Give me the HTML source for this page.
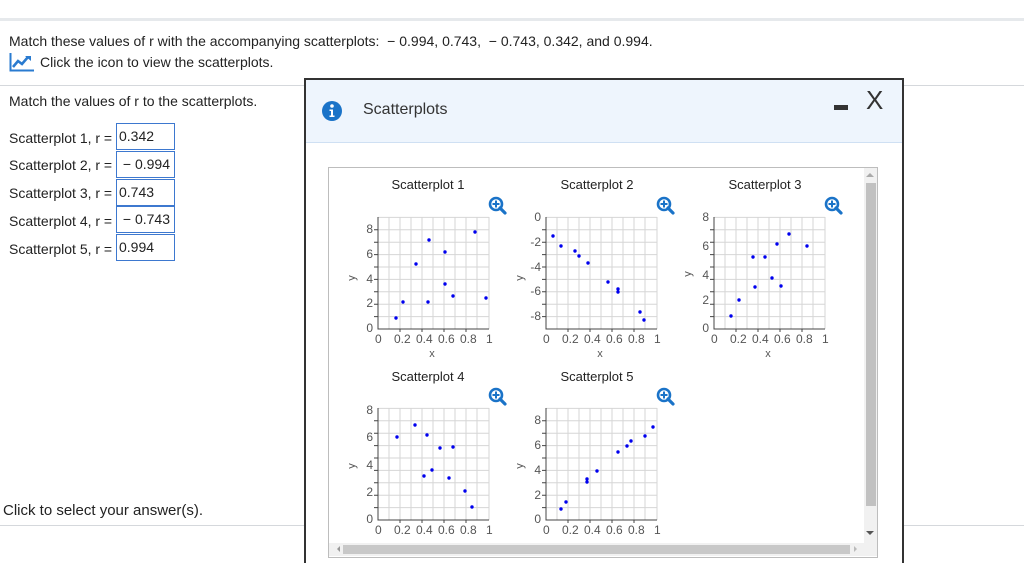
<!DOCTYPE html>
<html><head><meta charset="utf-8">
<style>
html,body{margin:0;width:1024px;height:563px;overflow:hidden}
body{background:#fff;font-family:"Liberation Sans",Arial,sans-serif;color:#222;position:relative}
.a{position:absolute;white-space:nowrap}
.t{font-size:14px}
.box{position:absolute;left:116px;width:55px;height:25px;border:1px solid #3d78cf;font-size:14px;line-height:25px;padding-left:2px;box-sizing:content-box}
</style></head><body>
<div class="a" style="left:0;top:18px;width:1024px;height:3px;background:#e6e9ec"></div>
<div class="a t" style="left:9px;top:33px">Match these values of r with the accompanying scatterplots: &nbsp;− 0.994, 0.743, &nbsp;− 0.743, 0.342, and 0.994.</div>
<svg class="a" style="left:9px;top:52px" width="26" height="20" viewBox="0 0 26 20"><path d="M1.5 1v17.5H25" stroke="#2a7bd0" stroke-width="2" fill="none"/><path d="M4 15l5-6 4 3 6-7" stroke="#2a7bd0" stroke-width="2.6" fill="none"/><path d="M16 4h6v5z" fill="#2a7bd0"/></svg>
<div class="a t" style="left:40px;top:54px">Click the icon to view the scatterplots.</div>
<div class="a" style="left:0;top:85px;width:1024px;height:1px;background:#d5d8dc"></div>
<div class="a t" style="left:9px;top:93px">Match the values of r to the scatterplots.</div>
<div class="a t" style="left:9px;top:130px">Scatterplot 1, r =</div><div class="box" style="top:123px">0.342</div>
<div class="a t" style="left:9px;top:157px">Scatterplot 2, r =</div><div class="box" style="top:151px">&nbsp;− 0.994</div>
<div class="a t" style="left:9px;top:185px">Scatterplot 3, r =</div><div class="box" style="top:179px">0.743</div>
<div class="a t" style="left:9px;top:213px">Scatterplot 4, r =</div><div class="box" style="top:206px">&nbsp;− 0.743</div>
<div class="a t" style="left:9px;top:241px">Scatterplot 5, r =</div><div class="box" style="top:234px">0.994</div>
<div class="a" style="left:0;top:525px;width:1024px;height:1px;background:#d5d8dc"></div>
<div class="a" style="left:3px;top:502px;font-size:15px">Click to select your answer(s).</div>

<div class="a" style="left:304px;top:78px;width:596px;height:500px;border:2px solid #333;background:#fff"></div>
<div class="a" style="left:306px;top:80px;width:596px;height:62px;background:#eef5fd;border-bottom:1px solid #cfe0f3"></div>
<svg class="a" style="left:322px;top:101px" width="20" height="20"><circle cx="10" cy="10" r="10" fill="#1a73c8"/><circle cx="10" cy="5" r="1.8" fill="#fff"/><path d="M7.5 8.5h3.5v6h1.5v1.5h-5v-1.5h1.5v-4.5h-1.5z" fill="#fff"/></svg>
<div class="a" style="left:363px;top:101px;font-size:16px;color:#333">Scatterplots</div>
<div class="a" style="left:834px;top:105px;width:14px;height:5px;background:#333"></div>
<div class="a" style="left:866px;top:85px;font-size:26px;color:#333">X</div>

<div class="a" style="left:328px;top:167px;width:548px;height:389px;border:1px solid #bdbdbd"></div>
<div class="a" style="left:864px;top:168px;width:13px;height:388px;background:#f1f1f1"></div>
<div class="a" style="left:866px;top:183px;width:10px;height:323px;background:#c1c1c1"></div>
<div class="a" style="left:329px;top:543px;width:535px;height:13px;background:#f1f1f1"></div>
<div class="a" style="left:343px;top:545px;width:507px;height:9px;background:#c8c8c8"></div>

<svg class="a" style="left:0;top:0" width="1024" height="563" font-family="Liberation Sans,Arial,sans-serif">
<defs>
<g id="g" stroke="#d6d6d6" stroke-width="1">
<path d="M11 0V-112M22 0V-112M33 0V-112M44 0V-112M55 0V-112M66 0V-112M77 0V-112M88 0V-112M99 0V-112M111 0V-112M0 -12.4H111M0 -24.8H111M0 -37.2H111M0 -49.6H111M0 -62H111M0 -74.4H111M0 -86.8H111M0 -99.2H111M0 -111.6H111"/>
<path d="M0 -112V0H111" stroke="#444" fill="none"/>
<path d="M-4 -12.4H0M-4 -37.2H0M-4 -62H0M-4 -86.8H0M22 0v3M44 0v3M66 0v3M88 0v3M-4 -24.8H0M-4 -49.6H0M-4 -74.4H0M-4 -99.2H0" stroke="#444"/>
<g fill="#555" stroke="none" font-size="12"><text x="-3" y="14">0</text><text x="16" y="14">0.2</text><text x="38" y="14">0.4</text><text x="60" y="14">0.6</text><text x="82" y="14">0.8</text><text x="108" y="14">1</text></g>
</g>
<g id="z"><circle cx="7" cy="7" r="6" fill="none" stroke="#1a73c8" stroke-width="2.6"/><path d="M7 3.5v7M3.5 7h7" stroke="#1a73c8" stroke-width="2"/><path d="M11 11l5 5" stroke="#1a73c8" stroke-width="3.2" stroke-linecap="round"/></g>
</defs>
<g font-size="13" fill="#222" text-anchor="middle"><text x="428" y="189">Scatterplot 1</text><text x="597" y="189">Scatterplot 2</text><text x="765" y="189">Scatterplot 3</text><text x="428" y="381">Scatterplot 4</text><text x="597" y="381">Scatterplot 5</text></g>
<use href="#z" x="489" y="197"/><use href="#z" x="657" y="197"/><use href="#z" x="825" y="197"/><use href="#z" x="489" y="388"/><use href="#z" x="657" y="388"/>
<use href="#g" x="378" y="329"/><use href="#g" x="546" y="329"/><use href="#g" x="714" y="329"/><use href="#g" x="378" y="520"/><use href="#g" x="546" y="520"/>
<g font-size="12" fill="#555" text-anchor="end">
<text x="373" y="233">8</text><text x="373" y="258">6</text><text x="373" y="283">4</text><text x="373" y="307">2</text><text x="373" y="332">0</text>
<text x="541" y="221">0</text><text x="541" y="246">-2</text><text x="541" y="271">-4</text><text x="541" y="295">-6</text><text x="541" y="320">-8</text>
<text x="709" y="221">8</text><text x="709" y="250">6</text><text x="709" y="279">4</text><text x="709" y="304">2</text><text x="709" y="332">0</text>
<text x="373" y="414">8</text><text x="373" y="441">6</text><text x="373" y="469">4</text><text x="373" y="496">2</text><text x="373" y="523">0</text>
<text x="541" y="424">8</text><text x="541" y="449">6</text><text x="541" y="474">4</text><text x="541" y="499">2</text><text x="541" y="523">0</text>
</g>
<g font-size="11" fill="#555" text-anchor="middle">
<text x="432" y="357">x</text><text x="600" y="357">x</text><text x="768" y="357">x</text>
<text transform="translate(355,278) rotate(-90)">y</text><text transform="translate(523,278) rotate(-90)">y</text><text transform="translate(691,274) rotate(-90)">y</text><text transform="translate(355,466) rotate(-90)">y</text><text transform="translate(523,466) rotate(-90)">y</text>
</g>
<g fill="#0000ee">
<circle cx="396" cy="318" r="1.7"/><circle cx="403" cy="302" r="1.7"/><circle cx="416" cy="264" r="1.7"/><circle cx="428" cy="302" r="1.7"/><circle cx="429" cy="240" r="1.7"/><circle cx="445" cy="252" r="1.7"/><circle cx="445" cy="284" r="1.7"/><circle cx="453" cy="296" r="1.7"/><circle cx="475" cy="232" r="1.7"/><circle cx="486" cy="298" r="1.7"/>
<circle cx="553" cy="236" r="1.7"/><circle cx="561" cy="246" r="1.7"/><circle cx="575" cy="251" r="1.7"/><circle cx="579" cy="256" r="1.7"/><circle cx="588" cy="263" r="1.7"/><circle cx="608" cy="282" r="1.7"/><circle cx="618" cy="289" r="1.7"/><circle cx="618" cy="292" r="1.7"/><circle cx="640" cy="312" r="1.7"/><circle cx="644" cy="320" r="1.7"/>
<circle cx="731" cy="316" r="1.7"/><circle cx="739" cy="300" r="1.7"/><circle cx="755" cy="287" r="1.7"/><circle cx="753" cy="257" r="1.7"/><circle cx="765" cy="257" r="1.7"/><circle cx="772" cy="278" r="1.7"/><circle cx="777" cy="244" r="1.7"/><circle cx="781" cy="286" r="1.7"/><circle cx="789" cy="234" r="1.7"/><circle cx="807" cy="246" r="1.7"/>
<circle cx="397" cy="437" r="1.7"/><circle cx="415" cy="425" r="1.7"/><circle cx="427" cy="435" r="1.7"/><circle cx="440" cy="448" r="1.7"/><circle cx="453" cy="447" r="1.7"/><circle cx="432" cy="470" r="1.7"/><circle cx="424" cy="476" r="1.7"/><circle cx="449" cy="478" r="1.7"/><circle cx="465" cy="491" r="1.7"/><circle cx="472" cy="507" r="1.7"/>
<circle cx="561" cy="509" r="1.7"/><circle cx="566" cy="502" r="1.7"/><circle cx="587" cy="479" r="1.7"/><circle cx="587" cy="482" r="1.7"/><circle cx="597" cy="471" r="1.7"/><circle cx="618" cy="452" r="1.7"/><circle cx="627" cy="446" r="1.7"/><circle cx="631" cy="441" r="1.7"/><circle cx="645" cy="436" r="1.7"/><circle cx="653" cy="427" r="1.7"/>
</g>
<path d="M866 177l4-4 4 4z" fill="#aaa"/><path d="M866 531l4 4 4-4z" fill="#555"/><path d="M340 546v6l-3-3z" fill="#999"/><path d="M854 546v6l3-3z" fill="#bbb"/>
</svg>
</body></html>
